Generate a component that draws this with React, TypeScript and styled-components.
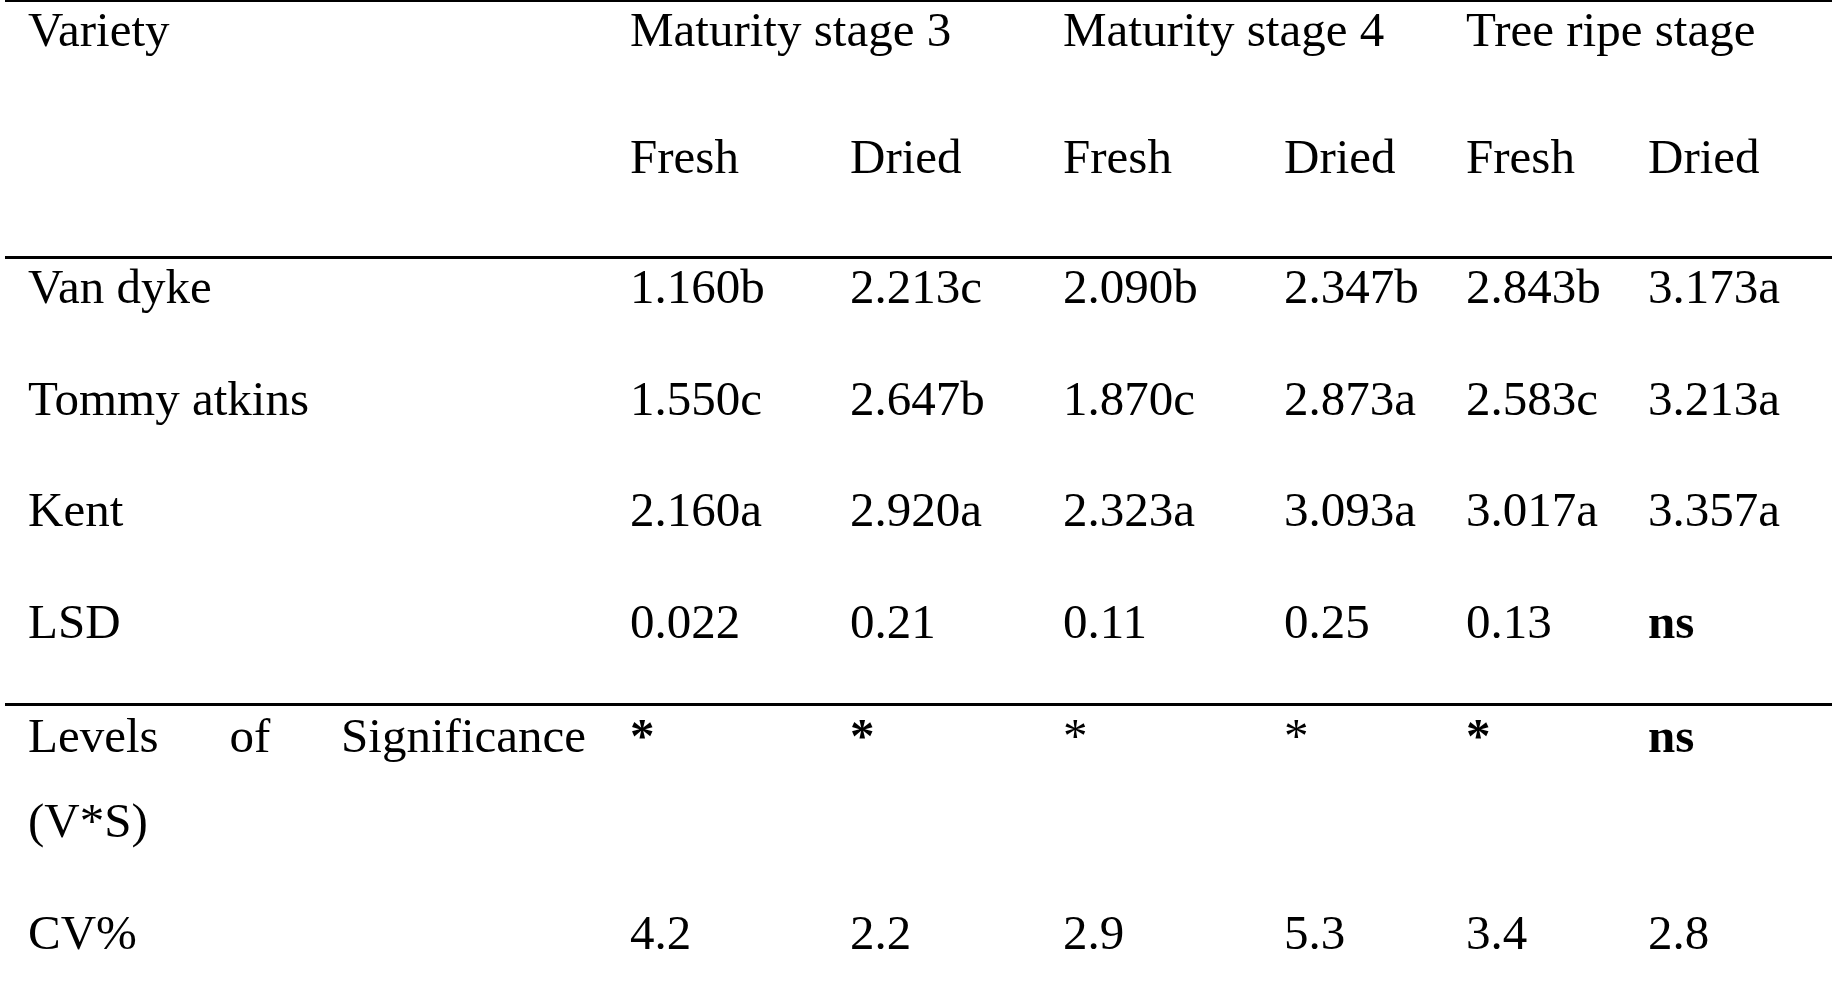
import React from "react";
import styled, { createGlobalStyle, css } from "styled-components";

const GlobalStyle = createGlobalStyle`
  html, body {
    margin: 0;
    background: #fff;
  }
  body {
    font-family: "Liberation Serif", "Times New Roman", serif;
    color: #000;
  }
`;

const Table = styled.div`
  width: 1827px;
  margin-left: 5px;
  border-top: 2px solid #000;
  font-size: 49px;
  line-height: 56px;
`;

interface IRow {
  $pt?: number;
  $pb?: number;
  $mt?: number;
  $lh?: number;
  $rule?: boolean;
}

const Row = styled.div<IRow>`
  display: grid;
  grid-template-columns: 625px 220px 213px 221px 182px 182px 184px;
  align-items: start;
  padding-top: ${(p) => p.$pt ?? 0}px;
  padding-bottom: ${(p) => p.$pb ?? 0}px;
  margin-top: ${(p) => p.$mt ?? 0}px;
  line-height: ${(p) => p.$lh ?? 56}px;

  // rule under the row
  ${(p) =>
    p.$rule &&
    css`
      border-bottom: 3px solid #000;
    `}
`;

const Cell = styled.div<{ $span?: number; $bold?: boolean }>`
  white-space: nowrap;
  grid-column: span ${(p) => p.$span ?? 1};
  font-weight: ${(p) => (p.$bold ? 700 : 400)};
`;

const LabelCell = styled.div<{ $justify?: boolean }>`
  padding: 0 44px 0 23px;
  white-space: ${(p) => (p.$justify ? "normal" : "nowrap")};
  text-align: ${(p) => (p.$justify ? "justify" : "left")};
`;

type Value = string | { v: string; bold: boolean };

const data: { label: string; values: Value[] }[] = [
  { label: "Van dyke", values: ["1.160b", "2.213c", "2.090b", "2.347b", "2.843b", "3.173a"] },
  { label: "Tommy atkins", values: ["1.550c", "2.647b", "1.870c", "2.873a", "2.583c", "3.213a"] },
  { label: "Kent", values: ["2.160a", "2.920a", "2.323a", "3.093a", "3.017a", "3.357a"] },
];

const lsd: Value[] = ["0.022", "0.21", "0.11", "0.25", "0.13", { v: "ns", bold: true }];
const levels: Value[] = [
  { v: "*", bold: true },
  { v: "*", bold: true },
  "*",
  "*",
  { v: "*", bold: true },
  { v: "ns", bold: true },
];
const cv: Value[] = ["4.2", "2.2", "2.9", "5.3", "3.4", "2.8"];

const Values = ({ values }: { values: Value[] }) => (
  <>
    {values.map((val, i) =>
      typeof val === "string" ? (
        <Cell key={i}>{val}</Cell>
      ) : (
        <Cell key={i} $bold={val.bold}>
          {val.v}
        </Cell>
      )
    )}
  </>
);

export default function App() {
  return (
    <>
      <GlobalStyle />
      <Table>
        <Row $pb={70.5}>
          <LabelCell>Variety</LabelCell>
          <Cell $span={2}>Maturity stage 3</Cell>
          <Cell $span={2}>Maturity stage 4</Cell>
          <Cell $span={2}>Tree ripe stage</Cell>
        </Row>
        <Row $pb={71.5} $rule>
          <LabelCell />
          <Cell>Fresh</Cell>
          <Cell>Dried</Cell>
          <Cell>Fresh</Cell>
          <Cell>Dried</Cell>
          <Cell>Fresh</Cell>
          <Cell>Dried</Cell>
        </Row>
        {data.map((row) => (
          <Row key={row.label} $pb={55.5}>
            <LabelCell>{row.label}</LabelCell>
            <Values values={row.values} />
          </Row>
        ))}
        <Row $pb={53.5} $rule>
          <LabelCell>LSD</LabelCell>
          <Values values={lsd} />
        </Row>
        <Row $mt={-13.5} $lh={85} $pb={42}>
          <LabelCell $justify>Levels of Significance (V*S)</LabelCell>
          <Values values={levels} />
        </Row>
        <Row $pb={41}>
          <LabelCell>CV%</LabelCell>
          <Values values={cv} />
        </Row>
      </Table>
    </>
  );
}
